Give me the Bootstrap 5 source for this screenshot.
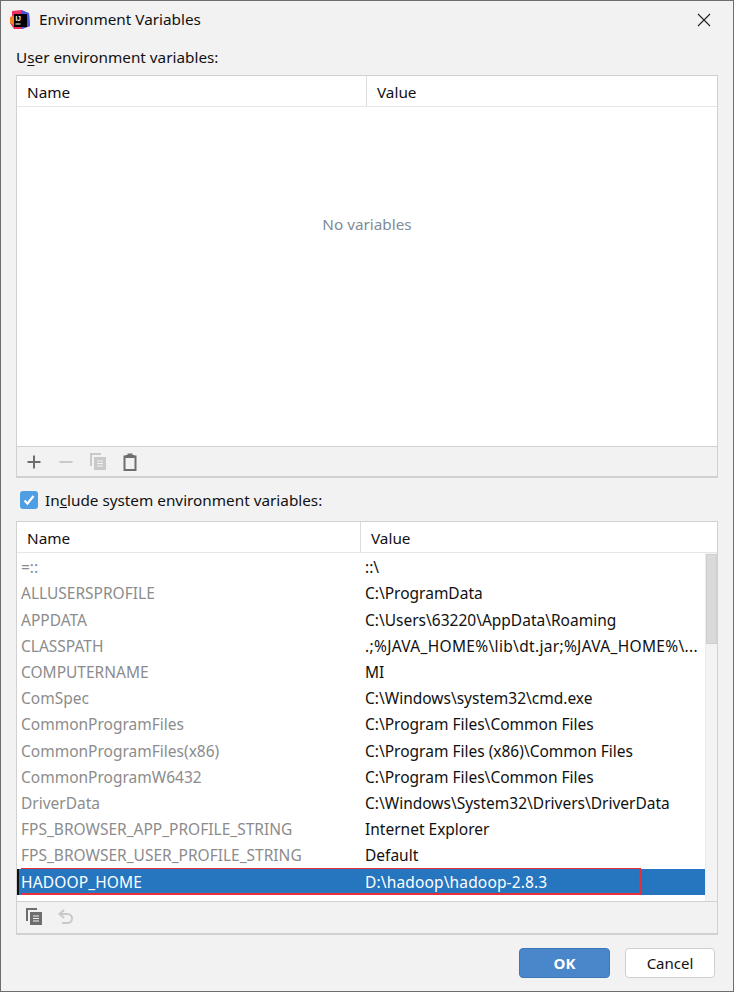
<!DOCTYPE html>
<html lang="en"><head><meta charset="utf-8"><title>Environment Variables</title>
<link href="https://cdn.jsdelivr.net/npm/bootstrap@5.3.0/dist/css/bootstrap.min.css" rel="stylesheet">
<style>
html,body{margin:0;height:992px;overflow:hidden;background:#f2f2f2}
body{font-family:"Noto Sans","Open Sans",sans-serif;font-size:15.3px;color:#111}
.dlg{width:734px;height:992px;border:1px solid #6e6e6e;background:#f2f2f2;padding:0 15px}
.ttl{height:37px;margin:0 -15px;padding:0 9px}
.ttl svg{flex:none}
.ttltext{margin-left:9px}
.xbtn{width:16px;height:16px;margin-right:12px;display:block}
.lbl{height:37px;padding-top:8px;line-height:22px}
.lbl u{text-underline-offset:2px}
.pane{border:1px solid #d1d1d1;border-bottom-width:2px;background:#f2f2f2}
.p1{height:403px;width:702px}
.p2{height:414px;width:702px;position:relative}
.hd{height:31px;background:#fff;border-bottom:1px solid #e6e6e6}
.hd>div{padding-left:10px;line-height:32px}
.h1a{width:350px;border-right:1px solid #dcdcdc}
.h2a{width:344px;border-right:1px solid #dcdcdc}
.emp{height:340px;background:#fff;color:#7f8b98;padding-top:106px;border-bottom:1px solid #d1d1d1}
.tb{height:30px;padding-left:7px;gap:12px}
.tb svg{display:block}
.chkline{height:43px;padding-left:4px;padding-top:1px}
.chk{width:18px;height:18px;border-radius:3px;background:#4f9ee3;margin-right:7px;display:flex;align-items:center;justify-content:center}
.bodyrow{height:349px;background:#fff;border-bottom:1px solid #d1d1d1}
.lst{flex:1;min-width:0;overflow:hidden;padding-top:1.2px}
.rw{height:26.2px;line-height:26.2px;white-space:nowrap;font-size:15.5px}
.nm{width:344px;padding-left:4px;color:#8c8c8c;flex:none}
.val{padding-left:4px;color:#111}
.wide{letter-spacing:.32px}
.sel{background:#2675bf;letter-spacing:.15px;margin-top:.3px}
.sel .nm,.sel .val{color:#fff}
.sel .nm{box-shadow:inset 2px 0 0 #101010}
.sb{width:12px;flex:none;background:#f3f3f3;border-left:1px solid #ececec}
.thumb{height:90px;background:#d9d9d9;border:1px solid #cfcfcf;margin-top:1px}
.redbox{position:absolute;left:4px;top:346px;width:620px;height:27px;border:solid #e8303a;border-width:1.5px 2px 2px 1.5px;pointer-events:none}
.btm{padding-top:13px;padding-right:3px;gap:15px}
.okb,.ccb{height:30px;padding:0;font-size:15px;border-radius:4px;font-family:inherit}
.okb{width:91px;background:#4a87ca;border:1px solid #3f78b8;color:#fff;font-weight:700}
.ccb{width:90px;background:#fff;border:1px solid #cfcfcf;color:#111}
</style></head><body>
<div class="dlg d-flex flex-column">
 <div class="ttl d-flex align-items-center">
  <svg width="20" height="20" viewBox="0 0 20 20"><polygon points="2,1 12,0 19,4 20,16 12,19 4,19 0,13 2,7" fill="#ef2d63"/><polygon points="11,0 19,3 20,16 12,19" fill="#4a55e0"/><polygon points="0,7 4,6 4,15 0,13" fill="#f58220"/><rect x="4" y="4" width="13" height="13" fill="#000"/><text x="5.5" y="10.5" font-size="6.500" font-family="Liberation Sans" font-weight="700" fill="#fff">IJ</text><rect x="5.5" y="13.500" width="5" height="1" fill="#fff"/></svg>
  <span class="ttltext flex-grow-1">Environment Variables</span>
  <svg class="xbtn" viewBox="0 0 16 16"><path d="M2 2 14 14M14 2 2 14" stroke="#222" stroke-width="1.1" fill="none"/></svg>
 </div>
 <div class="lbl">U<u>s</u>er environment variables:</div>
 <div class="pane p1">
  <div class="hd d-flex"><div class="h1a">Name</div><div>Value</div></div>
  <div class="emp d-flex justify-content-center">No variables</div>
  <div class="tb d-flex align-items-center">
   <svg width="20" height="20" viewBox="0 0 20 20"><path d="M10 3.500v13M3.500 10h13" stroke="#6e6e6e" stroke-width="2"/></svg>
   <svg width="20" height="20" viewBox="0 0 20 20"><path d="M3.500 10h13" stroke="#c9c9c9" stroke-width="2"/></svg>
   <svg width="20" height="20" viewBox="0 0 20 20"><path d="M2 1h11v2H4v11H2z" fill="#c9c9c9"/><path d="M6 5h12v13H6z" fill="#c9c9c9"/><path d="M9 9h6M9 11.500h6M9 14h6" stroke="#f2f2f2"/></svg>
   <svg width="20" height="20" viewBox="0 0 20 20"><path d="M4.500 4.500h11V18h-11z" fill="none" stroke="#6e6e6e" stroke-width="2"/><path d="M7.500 1.500h5V3h2v3h-9V3h2z" fill="#6e6e6e"/></svg>
  </div>
 </div>
 <div class="chkline d-flex align-items-center">
  <span class="chk"><svg width="14" height="14" viewBox="0 0 14 14"><path d="M2.500 7.500 5.500 10.500 11.500 3" fill="none" stroke="#fff" stroke-width="2.200"/></svg></span>
  <span>In<u>c</u>lude system environment variables:</span>
 </div>
 <div class="pane p2">
  <div class="hd d-flex"><div class="h2a">Name</div><div>Value</div></div>
  <div class="bodyrow d-flex">
   <div class="lst">
    <div class="rw d-flex"><div class="nm">=::</div><div class="val">::\</div></div>
    <div class="rw d-flex"><div class="nm">ALLUSERSPROFILE</div><div class="val">C:\ProgramData</div></div>
    <div class="rw d-flex"><div class="nm">APPDATA</div><div class="val">C:\Users\63220\AppData\Roaming</div></div>
    <div class="rw d-flex"><div class="nm">CLASSPATH</div><div class="val wide">.;%JAVA_HOME%\lib\dt.jar;%JAVA_HOME%\...</div></div>
    <div class="rw d-flex"><div class="nm">COMPUTERNAME</div><div class="val">MI</div></div>
    <div class="rw d-flex"><div class="nm">ComSpec</div><div class="val">C:\Windows\system32\cmd.exe</div></div>
    <div class="rw d-flex"><div class="nm">CommonProgramFiles</div><div class="val">C:\Program Files\Common Files</div></div>
    <div class="rw d-flex"><div class="nm">CommonProgramFiles(x86)</div><div class="val">C:\Program Files (x86)\Common Files</div></div>
    <div class="rw d-flex"><div class="nm">CommonProgramW6432</div><div class="val">C:\Program Files\Common Files</div></div>
    <div class="rw d-flex"><div class="nm">DriverData</div><div class="val">C:\Windows\System32\Drivers\DriverData</div></div>
    <div class="rw d-flex"><div class="nm">FPS_BROWSER_APP_PROFILE_STRING</div><div class="val">Internet Explorer</div></div>
    <div class="rw d-flex"><div class="nm">FPS_BROWSER_USER_PROFILE_STRING</div><div class="val">Default</div></div>
    <div class="rw d-flex sel"><div class="nm">HADOOP_HOME</div><div class="val">D:\hadoop\hadoop-2.8.3</div></div>
   </div>
   <div class="sb"><div class="thumb"></div></div>
  </div>
  <div class="tb d-flex align-items-center">
   <svg width="20" height="20" viewBox="0 0 20 20"><path d="M2 1h11v2H4v11H2z" fill="#6e6e6e"/><path d="M6 5h12v13H6z" fill="#6e6e6e"/><path d="M9 9h6M9 11.500h6M9 14h6" stroke="#f2f2f2"/></svg>
   <svg width="20" height="20" viewBox="0 0 20 20"><path d="M8 3 3.500 7 8 11M4 7h7.500a4.500 4.500 0 0 1 0 9H6" fill="none" stroke="#c9c9c9" stroke-width="2"/></svg>
  </div>
  <div class="redbox"></div>
 </div>
 <div class="btm d-flex justify-content-end">
  <button class="btn okb" type="button">OK</button>
  <button class="btn ccb" type="button">Cancel</button>
 </div>
</div>
<script src="https://cdn.jsdelivr.net/npm/bootstrap@5.3.0/dist/js/bootstrap.bundle.min.js"></script>
</body></html>
